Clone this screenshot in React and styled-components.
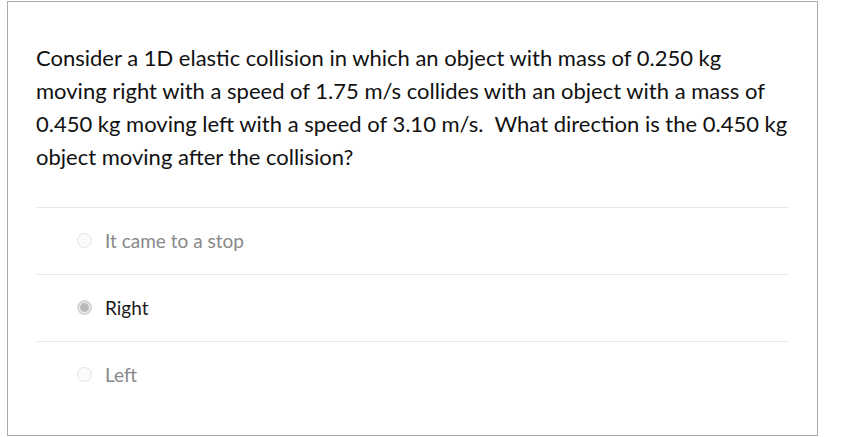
import React from 'react';
import styled, { createGlobalStyle } from 'styled-components';

const GlobalStyle = createGlobalStyle`
  html, body {
    margin: 0;
    padding: 0;
    background: #ffffff;
  }
  body {
    font-family: Lato, "Noto Sans", sans-serif;
  }
`;

const Page = styled.div`
  padding: 1px 0 0 7px;
  width: 856px;
  height: 437px;
  box-sizing: border-box;
`;

const Card = styled.div`
  width: 811px;
  height: 435px;
  box-sizing: border-box;
  border: 1px solid #aaaaaa;
  padding: 39px 26px 0 28px;
`;

const QuestionText = styled.p`
  margin: 0;
  font-size: 22px;
  line-height: 33px;
  color: #111111;
`;

const Answers = styled.div`
  margin-top: 34px;
  margin-right: 2px;
`;

const AnswerRow = styled.label`
  display: flex;
  align-items: center;
  height: 67px;
  padding-bottom: 1px;
  box-sizing: border-box;
  border-top: 1px solid #e8e8e8;
  padding-left: 41px;
  gap: 13px;
`;

const Radio = styled.span`
  width: 15px;
  height: 15px;
  box-sizing: border-box;
  border-radius: 50%;
  border: ${p => (p.checked ? '2px solid #d6d6d6' : '1px solid #e2e2e2')};
  background: ${p => (p.checked ? '#b8b8b8' : '#fbfbfb')};
  box-shadow: ${p => (p.checked ? 'inset 0 0 0 1px #f4f4f4' : 'none')};
`;

const AnswerText = styled.span`
  font-size: 19px;
  color: ${p => (p.checked ? '#1b1b1b' : '#888888')};
`;

const answers = [
  { text: 'It came to a stop', checked: false },
  { text: 'Right', checked: true },
  { text: 'Left', checked: false },
];

export default function App() {
  return (
    <Page>
      <GlobalStyle />
      <Card>
        <QuestionText>
          Consider a 1D elastic collision in which an object with mass of 0.250 kg
          moving right with a speed of 1.75 m/s collides with an object with a mass of
          0.450 kg moving left with a speed of 3.10 m/s.&nbsp; What direction is the 0.450 kg
          object moving after the collision?
        </QuestionText>
        <Answers>
          {answers.map(a => (
            <AnswerRow key={a.text}>
              <Radio checked={a.checked} />
              <AnswerText checked={a.checked}>{a.text}</AnswerText>
            </AnswerRow>
          ))}
        </Answers>
      </Card>
    </Page>
  );
}
